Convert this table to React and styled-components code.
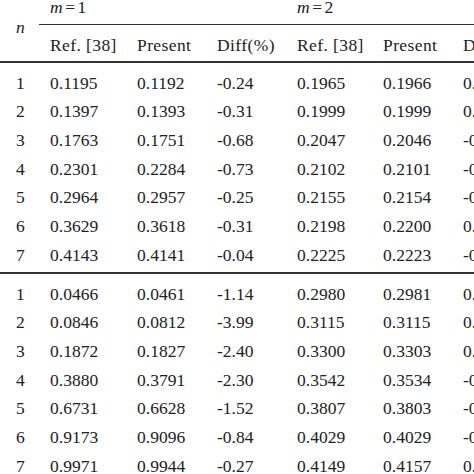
import React from "react";
import styled, { createGlobalStyle } from "styled-components";

const Global = createGlobalStyle`
  html, body { margin: 0; padding: 0; background: #ffffff; overflow: hidden; }
  body { width: 474px; height: 474px; }
`;

const COLS = "50px 87px 80px 80px 86px 80px 80px";
const ROW_H = "28.7px";

const Table = styled.div`
  width: 560px;
  font-family: "Liberation Serif", "Times New Roman", serif;
  font-size: 17.5px;
  color: #222;
`;

const Header = styled.div`
  display: grid;
  grid-template-columns: ${COLS};
  grid-template-rows: 14px 16.7px ${ROW_H};
`;

const NCell = styled.div`
  grid-column: 1;
  grid-row: 1 / 4;
  align-self: center;
  padding-left: 16px;
  padding-bottom: 5px;
  line-height: 20px;
  font-style: italic;
`;

const GroupLabel = styled.div`
  grid-row: 1;
  grid-column: ${(p) => p.$span};
  line-height: 14px;
  white-space: nowrap;
`;

const Var = styled.i`
  font-style: italic;
`;

const Eq = styled.span`
  margin: 0 2.5px;
`;

const CMidRule = styled.div`
  grid-row: 2;
  grid-column: 2 / -1;
  align-self: start;
  margin-top: 9.5px;
  margin-left: -11px;
  height: 1px;
  background: #333;
`;

const ColName = styled.div`
  grid-row: 3;
  grid-column: ${(p) => p.$col};
  line-height: ${ROW_H};
  letter-spacing: 0.4px;
  white-space: nowrap;
`;

const Rule = styled.div`
  height: 2px;
  background: #333;
  margin-top: ${(p) => p.$top}px;
`;

const Block = styled.div`
  padding-top: ${(p) => p.$top}px;
`;

const Row = styled.div`
  display: grid;
  grid-template-columns: ${COLS};
  line-height: ${ROW_H};
  height: ${ROW_H};
  white-space: nowrap;
`;

const Cell = styled.div`
  padding-left: ${(p) => (p.$first ? "16px" : "0")};
`;

const block1 = [
  ["1", "0.1195", "0.1192", "-0.24", "0.1965", "0.1966", "0.05"],
  ["2", "0.1397", "0.1393", "-0.31", "0.1999", "0.1999", "0.00"],
  ["3", "0.1763", "0.1751", "-0.68", "0.2047", "0.2046", "-0.05"],
  ["4", "0.2301", "0.2284", "-0.73", "0.2102", "0.2101", "-0.05"],
  ["5", "0.2964", "0.2957", "-0.25", "0.2155", "0.2154", "-0.05"],
  ["6", "0.3629", "0.3618", "-0.31", "0.2198", "0.2200", "0.09"],
  ["7", "0.4143", "0.4141", "-0.04", "0.2225", "0.2223", "-0.09"],
];

const block2 = [
  ["1", "0.0466", "0.0461", "-1.14", "0.2980", "0.2981", "0.03"],
  ["2", "0.0846", "0.0812", "-3.99", "0.3115", "0.3115", "0.00"],
  ["3", "0.1872", "0.1827", "-2.40", "0.3300", "0.3303", "0.09"],
  ["4", "0.3880", "0.3791", "-2.30", "0.3542", "0.3534", "-0.23"],
  ["5", "0.6731", "0.6628", "-1.52", "0.3807", "0.3803", "-0.11"],
  ["6", "0.9173", "0.9096", "-0.84", "0.4029", "0.4029", "-0.00"],
  ["7", "0.9971", "0.9944", "-0.27", "0.4149", "0.4157", "0.19"],
];

const colNames = ["Ref. [38]", "Present", "Diff(%)", "Ref. [38]", "Present", "Diff(%)"];

function DataBlock({ rows, top }) {
  return (
    <Block $top={top}>
      {rows.map((r, i) => (
        <Row key={i}>
          {r.map((v, j) => (
            <Cell key={j} $first={j === 0}>
              {v}
            </Cell>
          ))}
        </Row>
      ))}
    </Block>
  );
}

export default function App() {
  return (
    <>
      <Global />
      <Table>
        <Header>
          <NCell>n</NCell>
          <GroupLabel $span="2 / 5">
            <Var>m</Var>
            <Eq>=</Eq>1
          </GroupLabel>
          <GroupLabel $span="5 / 8">
            <Var>m</Var>
            <Eq>=</Eq>2
          </GroupLabel>
          <CMidRule />
          {colNames.map((c, i) => (
            <ColName key={i} $col={i + 2}>
              {c}
            </ColName>
          ))}
        </Header>
        <Rule $top={1.6} />
        <DataBlock rows={block1} top={5.7} />
        <Rule $top={2.1} />
        <DataBlock rows={block2} top={6} />
      </Table>
    </>
  );
}
